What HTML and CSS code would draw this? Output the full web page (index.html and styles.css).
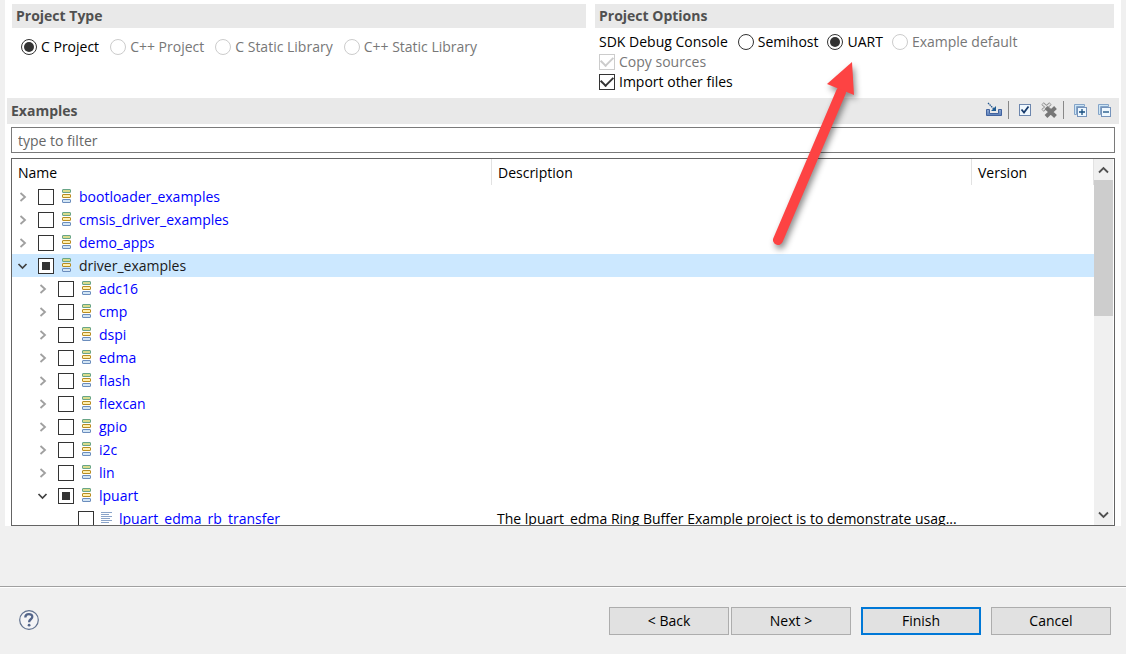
FILE: index.html
```html
<!DOCTYPE html>
<html lang="en">
<head>
<meta charset="utf-8">
<title>Import SDK examples</title>
<link rel="stylesheet" href="styles.css">
</head>
<body>
<svg class="defs" aria-hidden="true">
  <defs>
    <linearGradient id="tray" x1="0" y1="0" x2="0" y2="1"><stop offset="0" stop-color="#8fa9d3"/><stop offset="1" stop-color="#5b7fb9"/></linearGradient>
    <symbol id="group" viewBox="0 0 11 16">
      <rect x="1.500" y=".5" width="8" height="3" rx=".5" fill="#d9dc8c" stroke="#69a588"/>
      <rect x="1.500" y="5.500" width="8" height="3" rx=".5" fill="#fff0b0" stroke="#b98d22"/>
      <rect x="1.500" y="10.500" width="8" height="3" rx=".5" fill="#d3e5f4" stroke="#6b8dbd"/>
    </symbol>
    <symbol id="doc" viewBox="0 0 11 16">
      <path d="M0 1.500h11M0 3.500h8M0 5.500h11M0 7.500h9M0 9.500h11M0 11.500h8" stroke="#8ba4c9" fill="none"/>
    </symbol>
    <symbol id="closed" viewBox="0 0 14 16"><path d="M3.500 4l4.500 4-4.500 4" fill="none" stroke="#a0a0a0" stroke-width="1.800"/></symbol>
    <symbol id="open" viewBox="0 0 14 16"><path d="M1.500 6l4 4 4-4" fill="none" stroke="#404040" stroke-width="1.700"/></symbol>
  </defs>
</svg>
<main class="wizard">
  <div class="page">
    <div class="groups">
      <section>
        <h2 class="bar">Project Type</h2>
        <div class="choices type">
          <label><input type="radio" name="type" checked>C Project</label>
          <label class="off"><input type="radio" name="type" disabled>C++ Project</label>
          <label class="off"><input type="radio" name="type" disabled>C Static Library</label>
          <label class="off"><input type="radio" name="type" disabled>C++ Static Library</label>
        </div>
      </section>
      <section>
        <h2 class="bar">Project Options</h2>
        <div class="options">
          <div class="choices">
            <span class="caption">SDK Debug Console</span>
            <label><input type="radio" name="console">Semihost</label>
            <label><input type="radio" name="console" checked>UART</label>
            <label class="off"><input type="radio" name="console" disabled>Example default</label>
          </div>
          <label class="off"><input type="checkbox" checked disabled>Copy sources</label>
          <label><input type="checkbox" checked>Import other files</label>
        </div>
      </section>
    </div>
    <section class="examples">
      <header class="bar examples-bar">
        <h2>Examples</h2>
        <div class="toolbar">
          <button type="button" aria-label="Import"><svg width="16" height="16" viewBox="0 0 16 16"><path d="M.5 7.500h3v4h9v-4h3v6H.5z" fill="url(#tray)" stroke="#41639f"/><path d="M2 1l6 6" stroke="#24588f" stroke-dasharray="1.500 .7" stroke-width="1.300"/><path d="M10 4v5H5z" fill="#1f5c93"/></svg></button>
          <span class="sep"></span>
          <button type="button" class="check" aria-label="Select all"><svg width="12" height="12" viewBox="0 0 12 12"><rect x=".5" y=".5" width="11" height="11" fill="#eff7fd" stroke="#6c86ad"/><path d="M2.500 5.500l2.500 3 4.500-6" fill="none" stroke="#163a6b" stroke-width="1.800"/></svg></button>
          <button type="button" class="clear" aria-label="Deselect all"><svg width="16" height="16" viewBox="0 0 16 16"><path d="M1.500 1.500l8 7m0-7l-8 7" stroke="#929292" stroke-width="3.600"/><path d="M1.800 1.800l7.400 6.400m0-6.400L1.800 8.200" stroke="#e4e4e4" stroke-width="1.700"/><path d="M5 5.500l9.500 9M14.500 5.500L5 14.500" stroke="#777" stroke-width="4"/></svg></button>
          <span class="sep"></span>
          <button type="button" class="expand" aria-label="Expand all"><svg width="13" height="13" viewBox="0 0 13 13"><path d="M.5 10.500v-10h10v2h-8v8z" fill="#cde6f6" stroke="#84a4c8"/><rect x="3.500" y="3.500" width="9" height="9" fill="#eef8ff" stroke="#7593bb"/><path d="M5 8h6M8 5v6" stroke="#174e80" stroke-width="1.300"/></svg></button>
          <button type="button" aria-label="Collapse all"><svg width="13" height="13" viewBox="0 0 13 13"><path d="M.5 10.500v-10h10v2h-8v8z" fill="#cde6f6" stroke="#84a4c8"/><rect x="3.500" y="3.500" width="9" height="9" fill="#eef8ff" stroke="#7593bb"/><path d="M5 8h6" stroke="#174e80" stroke-width="1.300"/></svg></button>
        </div>
      </header>
      <div class="body">
        <input class="filter" type="text" placeholder="type to filter" aria-label="Filter examples">
        <div class="tree">
          <div class="view">
            <table>
              <colgroup><col class="wide"><col class="wide"><col class="rest"></colgroup>
              <thead><tr><th>Name</th><th>Description</th><th>Version</th></tr></thead>
              <tbody>
                <tr><td><div class="node"><button type="button" aria-label="Expand"><svg><use href="#closed"/></svg></button><label><input type="checkbox"><svg><use href="#group"/></svg>bootloader_examples</label></div></td><td></td><td></td></tr>
                <tr><td><div class="node"><button type="button" aria-label="Expand"><svg><use href="#closed"/></svg></button><label><input type="checkbox"><svg><use href="#group"/></svg>cmsis_driver_examples</label></div></td><td></td><td></td></tr>
                <tr><td><div class="node"><button type="button" aria-label="Expand"><svg><use href="#closed"/></svg></button><label><input type="checkbox"><svg><use href="#group"/></svg>demo_apps</label></div></td><td></td><td></td></tr>
                <tr class="selected"><td><div class="node"><button type="button" aria-label="Collapse"><svg><use href="#open"/></svg></button><label><input class="mixed" type="checkbox"><svg><use href="#group"/></svg>driver_examples</label></div></td><td></td><td></td></tr>
                <tr><td><div class="node l2"><button type="button" aria-label="Expand"><svg><use href="#closed"/></svg></button><label><input type="checkbox"><svg><use href="#group"/></svg>adc16</label></div></td><td></td><td></td></tr>
                <tr><td><div class="node l2"><button type="button" aria-label="Expand"><svg><use href="#closed"/></svg></button><label><input type="checkbox"><svg><use href="#group"/></svg>cmp</label></div></td><td></td><td></td></tr>
                <tr><td><div class="node l2"><button type="button" aria-label="Expand"><svg><use href="#closed"/></svg></button><label><input type="checkbox"><svg><use href="#group"/></svg>dspi</label></div></td><td></td><td></td></tr>
                <tr><td><div class="node l2"><button type="button" aria-label="Expand"><svg><use href="#closed"/></svg></button><label><input type="checkbox"><svg><use href="#group"/></svg>edma</label></div></td><td></td><td></td></tr>
                <tr><td><div class="node l2"><button type="button" aria-label="Expand"><svg><use href="#closed"/></svg></button><label><input type="checkbox"><svg><use href="#group"/></svg>flash</label></div></td><td></td><td></td></tr>
                <tr><td><div class="node l2"><button type="button" aria-label="Expand"><svg><use href="#closed"/></svg></button><label><input type="checkbox"><svg><use href="#group"/></svg>flexcan</label></div></td><td></td><td></td></tr>
                <tr><td><div class="node l2"><button type="button" aria-label="Expand"><svg><use href="#closed"/></svg></button><label><input type="checkbox"><svg><use href="#group"/></svg>gpio</label></div></td><td></td><td></td></tr>
                <tr><td><div class="node l2"><button type="button" aria-label="Expand"><svg><use href="#closed"/></svg></button><label><input type="checkbox"><svg><use href="#group"/></svg>i2c</label></div></td><td></td><td></td></tr>
                <tr><td><div class="node l2"><button type="button" aria-label="Expand"><svg><use href="#closed"/></svg></button><label><input type="checkbox"><svg><use href="#group"/></svg>lin</label></div></td><td></td><td></td></tr>
                <tr><td><div class="node l2"><button type="button" aria-label="Collapse"><svg><use href="#open"/></svg></button><label><input class="mixed" type="checkbox"><svg><use href="#group"/></svg>lpuart</label></div></td><td></td><td></td></tr>
                <tr><td><div class="node l3"><label><input type="checkbox"><svg><use href="#doc"/></svg>lpuart_edma_rb_transfer</label></div></td><td class="desc">The lpuart_edma Ring Buffer Example project is to demonstrate usag...</td><td></td></tr>
              </tbody>
            </table>
          </div>
          <div class="scrollbar">
            <button type="button" aria-label="Scroll up"><svg width="12" height="8" viewBox="0 0 12 8"><path d="M1 6.500L5.500 2 10 6.500" fill="none" stroke="#505050" stroke-width="1.800"/></svg></button>
            <div class="track"><div class="thumb"></div></div>
            <button type="button" aria-label="Scroll down"><svg width="12" height="8" viewBox="0 0 12 8"><path d="M1 1.500L5.500 6 10 1.500" fill="none" stroke="#505050" stroke-width="1.800"/></svg></button>
          </div>
        </div>
      </div>
    </section>
  </div>
  <footer>
    <button type="button" class="help" aria-label="Help"><svg width="20" height="20" viewBox="0 0 20 20"><circle cx="10" cy="10" r="9.300" fill="#f4f4f6" stroke="#60718f" stroke-width="1.200"/><path d="M6.300 7.400C6.300 3 13.500 3.200 13.300 6.900c-.1 2.400-3.200 2.400-3.200 5.300" fill="none" stroke="#53658a" stroke-width="2.300"/><circle cx="10.100" cy="15.200" r="1.400" fill="#53658a"/></svg></button>
    <div class="actions">
      <div class="pair"><button type="button">&lt; Back</button><button type="button">Next &gt;</button></div>
      <button type="button" class="primary">Finish</button>
      <button type="button">Cancel</button>
    </div>
  </footer>
  <svg class="pointer" width="100" height="200" viewBox="0 0 100 200" aria-hidden="true"><path d="M18 186L81 38" stroke="#fd4343" stroke-width="10" stroke-linecap="round"/><path d="M92 8L67 30L94 41z" fill="#fd4343"/></svg>
</main>
</body>
</html>
```

FILE: styles.css
```css
* { box-sizing: border-box; }
body {
  margin: 0;
  background: #f0f0f0;
  color: #000;
  font: 14px/20px "Open Sans", "Noto Sans", sans-serif;
}
button, input { font: inherit; color: inherit; }
button { display: flex; align-items: center; justify-content: center; padding: 0; border: 0; background: none; }
svg { display: block; flex: none; }
.defs { position: absolute; width: 0; height: 0; }

.wizard { position: relative; display: flex; flex-direction: column; height: 100vh; min-height: 320px; }
.page { display: flex; flex-direction: column; flex: 1; min-height: 0; margin: 0 5px 60px; background: #fff; }
.groups { display: grid; grid-template-columns: 574fr 519fr; gap: 9px; height: 98px; padding: 4px 7px 0; }
h2 { margin: 0; font-size: 14px; font-weight: 700; line-height: 24px; }
.bar { padding: 0 4px; background: #e9e9e9; color: #505050; }

label { display: flex; align-items: center; gap: 4px; white-space: nowrap; }
.off { color: #777; }
.choices { display: flex; gap: 9px; white-space: nowrap; }
.type { gap: 11px; padding: 9px; }
.options { padding: 4px; }
.caption { margin-right: 1px; }

input[type="radio"], input[type="checkbox"] {
  appearance: none;
  display: grid;
  place-items: center;
  flex: none;
  width: 16px;
  height: 16px;
  margin: 0;
  border: 1px solid #333;
  background: #fff;
}
input[type="radio"] { border-radius: 50%; }
input[type="radio"]:checked::before { content: ""; width: 10px; height: 10px; border-radius: 50%; background: #333; }
input[type="checkbox"]:checked::before {
  content: "";
  width: 10px;
  height: 6px;
  margin-bottom: 4px;
  border: solid #333;
  border-width: 0 0 2px 2px;
  transform: rotate(-45deg);
}
input[type="radio"]:disabled, input[type="checkbox"]:disabled { border-color: #ccc; }
input[type="checkbox"]:disabled::before { border-color: #ccc; }
input.mixed::before { content: ""; width: 8px; height: 8px; background: #333; }

.examples { display: flex; flex-direction: column; flex: 1; min-height: 0; }
.examples-bar { display: flex; align-items: center; justify-content: space-between; height: 26px; margin: 0 2px; padding: 0 8px 0 4px; }
.toolbar { display: flex; align-items: center; gap: 6px; height: 24px; padding-bottom: 2px; }
.sep { width: 1px; height: 18px; background: #888; }
.check { margin: 0 4px; }
.expand { margin: 0 5px 0 4px; }
.body { display: flex; flex-direction: column; flex: 1; gap: 5px; min-height: 0; padding: 3px 6px 0; }
.filter { width: 100%; height: 26px; padding: 0 6px; border: 1px solid #7a7a7a; border-radius: 0; background: #fff; }
.filter::placeholder { color: #666; opacity: 1; }
.tree { display: flex; flex: 1; min-height: 0; border: 1px solid #646464; }
.view { flex: 1; min-width: 0; overflow: hidden; }
table { width: 100%; table-layout: fixed; border-collapse: separate; border-spacing: 0; }
.wide { width: 480px; }
th { height: 26px; padding: 2px 6px 0; border-right: 1px solid #e2e2e2; font-weight: 400; text-align: left; }
td { height: 23px; padding: 0; color: #00f; line-height: 22px; }
.selected { background: #cce8ff; }
.selected td { color: #1a1a1a; }
.node { display: flex; align-items: center; padding-left: 5px; gap: 7px; }
.node label { gap: 7px; height: 22px; }
.node button, .node button svg { width: 14px; height: 16px; }
.node label svg { width: 11px; height: 16px; }
.l2 { padding-left: 25px; }
.l3 { padding-left: 66px; }
.desc { padding: 0 5px; overflow: hidden; color: #000; text-overflow: ellipsis; white-space: nowrap; }

.scrollbar { display: flex; flex-direction: column; width: 20px; border-right: 1px solid #fff; background: #f0f0f0; }
.scrollbar button { height: 21px; }
.track { flex: 1; }
.thumb { height: 42%; background: #cdcdcd; }

footer { display: flex; align-items: center; justify-content: space-between; height: 68px; padding: 0 15px 0 19px; border-top: 1px solid #a0a0a0; box-shadow: inset 0 1px #fff; }
.help { height: 22px; align-items: flex-start; }
.actions { display: flex; gap: 10px; }
.pair { display: flex; gap: 2px; }
.actions button { width: 120px; height: 28px; border: 1px solid #adadad; background: #e1e1e1; }
.actions .primary { border: 2px solid #0078d7; }

.pointer { position: absolute; left: 760px; top: 54px; filter: drop-shadow(2px 4px 3px rgb(0 0 0 / 45%)); pointer-events: none; }
```
